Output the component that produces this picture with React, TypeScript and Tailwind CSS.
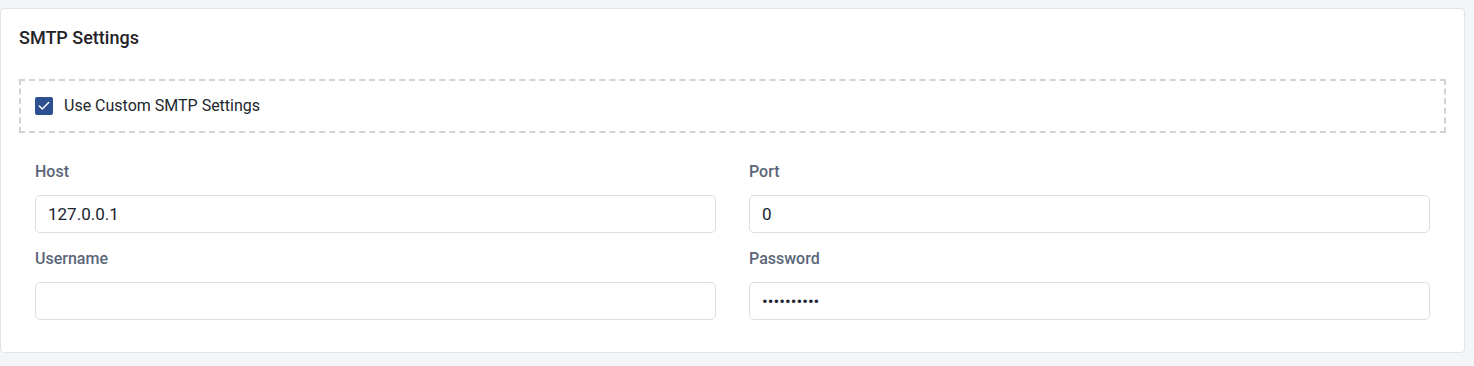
import { Check } from 'lucide-react'

const Field = ({ label, value, type = 'text' }: { label: string; value: string; type?: string }) => (
  <div className="flex flex-col">
    <label className="mb-[13px] text-[16px] font-medium leading-5 text-[#5a6678]">{label}</label>
    <input
      type={type}
      defaultValue={value}
      className="h-[38px] w-full rounded-[5px] border border-[#dcdee2] bg-white px-3 text-[17px] text-[#1c2230] outline-none"
    />
  </div>
)

export default function App() {
  return (
    <div className="h-[366px] bg-[#f4f5f7] pt-2 pr-[9px] font-['Roboto',sans-serif]">
      <div className="rounded-[4px] border border-[#e2e4e8] bg-white px-[18px] pt-[17px] pb-[32px]">
        <h2 className="text-[18px] font-medium leading-6 text-[#1f2328]">SMTP Settings</h2>
        <div className="mt-[29px] flex h-[54px] items-center border-2 border-dashed border-[#d2d2d2] pl-[14px]">
          <span className="flex h-[18px] w-[18px] items-center justify-center rounded-[2px] bg-[#2d5190]">
            <Check className="h-[14px] w-[14px] text-white" strokeWidth={2.5} />
          </span>
          <span className="ml-[11px] text-[16px] leading-5 text-[#22262c]">Use Custom SMTP Settings</span>
        </div>
        <div className="mt-[29px] grid grid-cols-2 gap-x-[33px] gap-y-[16px] px-4">
          <Field label="Host" value="127.0.0.1" />
          <Field label="Port" value="0" />
          <Field label="Username" value="" />
          <Field label="Password" value="1234567890" type="password" />
        </div>
      </div>
    </div>
  )
}
